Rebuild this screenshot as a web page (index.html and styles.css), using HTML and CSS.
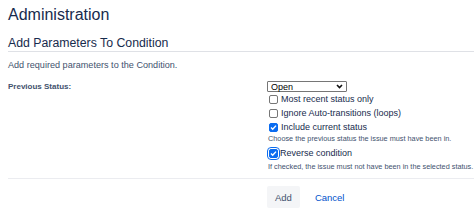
FILE: index.html
```html
<!DOCTYPE html>
<html lang="en">
<head>
    <meta charset="UTF-8">
    <title>Administration</title>
    <link rel="stylesheet" href="styles.css">
</head>
<body>

    <h1 class="page-title">Administration</h1>

    <div class="panel">
        <h2 class="section-title">Add Parameters To Condition</h2>
        <p class="intro">Add required parameters to the Condition.</p>

        <form class="cond-form">
            <div class="field-row">
                <label class="field-label" for="prevStatus">Previous Status:</label>
                <div class="field-body">
                    <div class="select-box" id="prevStatus">
                        <span>Open</span>
                        <svg class="chevron" width="7" height="5" viewBox="0 0 7 5"><path d="M1 1l2.5 2.5L6 1" fill="none" stroke="#111" stroke-width="1.6"/></svg>
                    </div>
                    <label class="check"><span class="box"></span>Most recent status only</label>
                    <label class="check"><span class="box"></span>Ignore Auto-transitions (loops)</label>
                    <label class="check"><span class="box checked"><svg width="7" height="7" viewBox="0 0 7 7"><path d="M1 3.6l1.7 1.7L6 1.6" fill="none" stroke="#fff" stroke-width="1.4"/></svg></span>Include current status</label>
                    <div class="hint">Choose the previous status the issue must have been in.</div>
                    <label class="check focus"><span class="box checked"><svg width="7" height="7" viewBox="0 0 7 7"><path d="M1 3.6l1.7 1.7L6 1.6" fill="none" stroke="#fff" stroke-width="1.4"/></svg></span>Reverse condition</label>
                    <div class="hint last">If checked, the issue must not have been in the selected status.</div>
                </div>
            </div>

            <div class="buttons">
                <button type="button" class="btn">Add</button>
                <a class="cancel" href="#">Cancel</a>
            </div>
        </form>
    </div>

</body>
</html>
```

FILE: styles.css
```css
body {
    margin: 0;
    padding: 0 0 0 8px;
    font-family: "Liberation Sans", Arial, sans-serif;
    color: #172b4d;
    background: #fff;
}
.page-title {
    margin: 0;
    padding-top: 5px;
    font-size: 16px;
    font-weight: normal;
    line-height: 20px;
}
.section-title {
    margin: 11px 0 0;
    font-size: 12.3px;
    font-weight: normal;
    line-height: 14px;
    padding-bottom: 1px;
    border-bottom: 1px solid #dfe1e6;
}
.intro {
    margin: 7px 0 0;
    font-size: 9.1px;
    line-height: 12px;
    color: #42526e;
}
.cond-form {
    margin-top: 10px;
}
.field-row {
    display: flex;
}
.field-label {
    width: 259px;
    font-size: 8px;
    font-weight: bold;
    color: #42526e;
    line-height: 12px;
}
.field-body {
    display: flex;
    flex-direction: column;
}
.select-box {
    width: 72px;
    height: 9px;
    border: 1px solid #767676;
    border-radius: 1px;
    display: flex;
    align-items: center;
    justify-content: space-between;
    padding: 0 3px 0 3px;
    font-size: 9px;
    color: #000;
}
.chevron {
    display: block;
}
.check {
    display: flex;
    align-items: center;
    font-size: 9px;
    line-height: 14px;
    color: #172b4d;
    margin-left: 2px;
}
.box {
    width: 7px;
    height: 7px;
    border: 1px solid #767676;
    border-radius: 2px;
    margin-right: 3px;
    display: flex;
    align-items: center;
    justify-content: center;
    background: #fff;
}
.box.checked {
    background: #0b6cf0;
    border-color: #0b6cf0;
}
.check.focus {
    margin-top: 2px;
}
.check.focus .box {
    outline: 1px solid #0b6cf0;
    outline-offset: 1px;
    margin-right: 2px;
}
.hint {
    font-size: 7.3px;
    line-height: 10px;
    color: #42526e;
    margin-left: 1px;
}
.hint.last {
    margin-top: 2px;
}
.buttons {
    margin-top: 6px;
    border-top: 1px solid #ebecf0;
    padding: 7px 0 0 259px;
    display: flex;
    align-items: center;
}
.btn {
    font-family: inherit;
    font-size: 9.5px;
    color: #42526e;
    background: #f4f5f7;
    border: none;
    border-radius: 2px;
    padding: 0 8px;
    height: 22px;
}
.cancel {
    font-size: 9.5px;
    color: #0052cc;
    text-decoration: none;
    margin-left: 15px;
}
```
